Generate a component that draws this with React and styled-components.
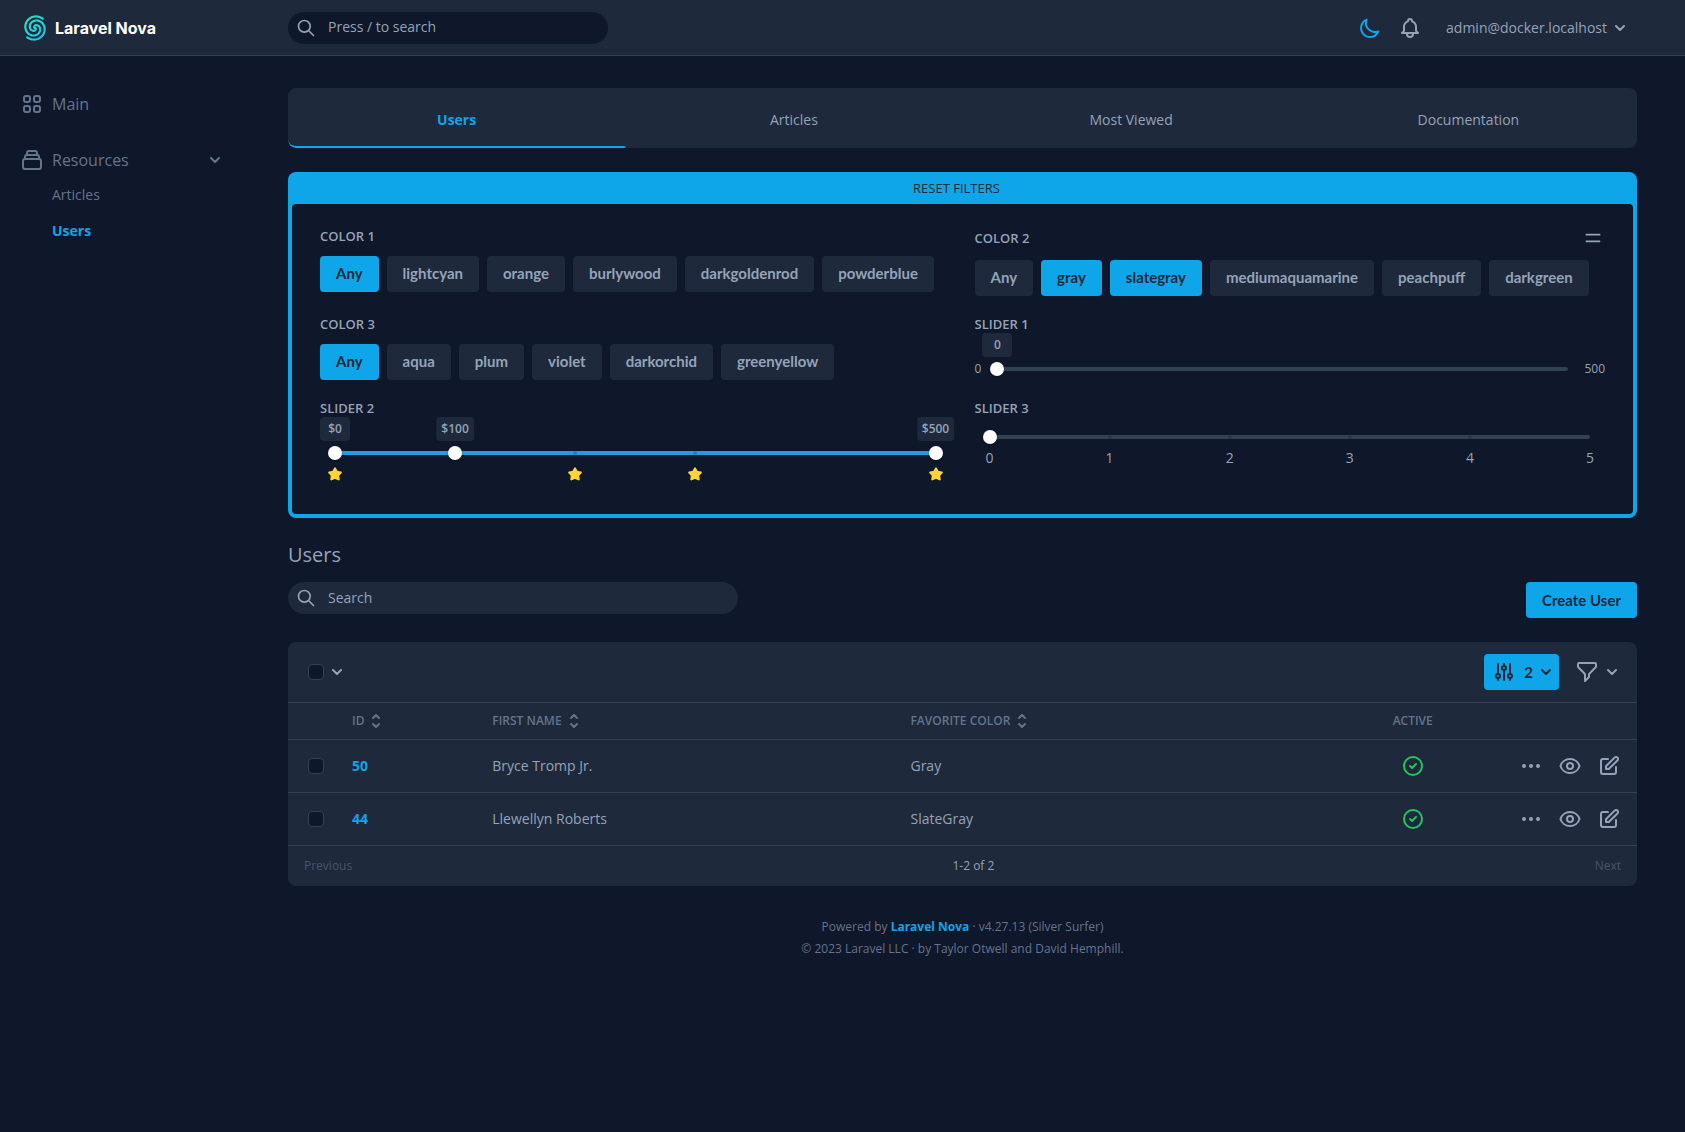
import React, { useState } from "react";
import styled, { createGlobalStyle } from "styled-components";
import {
  HiOutlineAdjustments,
  HiOutlineBell,
  HiOutlineCheckCircle,
  HiOutlineCollection,
  HiOutlineDotsHorizontal,
  HiOutlineEye,
  HiOutlineFilter,
  HiOutlineMenuAlt4,
  HiOutlineMoon,
  HiOutlinePencilAlt,
  HiOutlineSearch,
  HiOutlineViewGrid,
} from "react-icons/hi";

const GlobalStyle = createGlobalStyle`
  * { box-sizing: border-box; }

  body {
    margin: 0;
    background: #0f172a;
    color: #94a3b8;
    font-family: "Open Sans", "Noto Sans", sans-serif;
    font-size: 14px;
    line-height: 20px;
  }

  button, input {
    font: inherit;
    color: inherit;
    margin: 0;
  }

  button {
    padding: 0;
    border: 0;
    background: none;
    cursor: pointer;
  }

  a { text-decoration: none; }
  svg { display: block; flex-shrink: 0; }
`;

/* ---------- header ---------- */

const StyledHeader = styled.header`
  display: flex;
  align-items: center;
  height: 56px;
  padding-right: 48px;
  background: #1e293b;
  border-bottom: 1px solid #334155;
`;

const LogoLink = styled.a`
  display: flex;
  align-items: center;
  gap: 7px;
  width: 288px;
  padding-left: 22px;
  color: #fff;
  font-family: "Inter", sans-serif;
  font-size: 16px;
  font-weight: 700;
`;

const HeaderTools = styled.div`
  display: flex;
  align-items: center;
  gap: 16px;
  margin-left: auto;
`;

const IconButton = styled.button`
  display: flex;
  align-items: center;
  justify-content: center;
  min-width: ${(props) => (props.$small ? "10px" : "24px")};
  height: 24px;
  color: ${(props) => (props.$active ? "#0ea5e9" : "#94a3b8")};
`;

const UserButton = styled.button`
  display: flex;
  align-items: center;
  gap: 8px;
  height: 36px;
  padding: 0 12px 0 8px;
  font-weight: 500;
`;

const SearchLabel = styled.label`
  position: relative;
  display: block;
  width: ${(props) => props.$width};

  svg {
    position: absolute;
    left: 8px;
    top: 6px;
  }
`;

const SearchInput = styled.input`
  display: block;
  width: 100%;
  height: 32px;
  padding: 0 16px 2px 40px;
  border: 0;
  border-radius: 16px;
  outline: none;
  background: ${(props) => props.$bg};

  &::placeholder {
    color: #94a3b8;
    opacity: 1;
  }
`;

/* ---------- page and sidebar ---------- */

const Page = styled.div`
  display: flex;
  align-items: flex-start;
`;

const Sidebar = styled.nav`
  display: flex;
  flex-direction: column;
  flex: 0 0 288px;
  padding: 32px 68px 0 20px;
  color: #64748b;
`;

const MenuHeading = styled.a`
  display: flex;
  align-items: center;
  gap: 8px;
  height: 32px;
  color: inherit;
  font-size: 16px;
  line-height: 24px;
`;

const MenuToggle = styled.button`
  display: flex;
  align-items: center;
  gap: 8px;
  height: 32px;
  margin-top: 24px;
  font-size: 16px;
  line-height: 24px;

  svg:last-child { margin-left: auto; }
`;

const MenuList = styled.ul`
  list-style: none;
  margin: 1px 0 0;
  padding: 0 0 0 32px;
`;

const MenuLink = styled.a`
  display: flex;
  align-items: center;
  height: 36px;
  color: ${(props) => (props.$active ? "#0ea5e9" : "#64748b")};
  font-weight: ${(props) => (props.$active ? 700 : 500)};
`;

const Content = styled.main`
  flex: 1;
  min-width: 0;
  padding: 32px 48px 32px 0;
`;

/* ---------- tabs ---------- */

const TabBar = styled.div`
  display: grid;
  grid-template-columns: repeat(4, 1fr);
  margin-bottom: 24px;
  border-radius: 8px;
  background: #1e293b;
  overflow: hidden;
`;

const Tab = styled.button`
  padding: 22px 16px 16px;
  border-bottom: 2px solid ${(props) => (props.$active ? "#0ea5e9" : "transparent")};
  color: ${(props) => (props.$active ? "#0ea5e9" : "#94a3b8")};
  font-weight: ${(props) => (props.$active ? 700 : 500)};

  &:first-child { border-bottom-left-radius: 8px; }
`;

/* ---------- filters ---------- */

const FilterPanel = styled.section`
  padding: 4px;
  border-radius: 8px;
  background: #0ea5e9;
`;

const ResetButton = styled.button`
  display: block;
  width: 100%;
  height: 28px;
  padding: 0 12px 4px 0;
  color: #1e293b;
  font-size: 13px;
  font-weight: 500;
  text-transform: uppercase;
`;

const FilterGrid = styled.div`
  display: grid;
  grid-template-columns: 1fr 1fr;
  gap: 18px 24px;
  padding: 22px 28px 30px;
  border-radius: 4px;
  background: #0f172a;
`;

const FilterHead = styled.div`
  display: flex;
  align-items: center;
  justify-content: space-between;
`;

const FilterTitle = styled.h3`
  margin: 0;
  font-size: 13px;
  font-weight: 600;
  line-height: 20px;
  text-transform: uppercase;
`;

const ChipRow = styled.div`
  display: flex;
  flex-wrap: wrap;
  gap: 8px;
  margin-top: 10px;
`;

const Chip = styled.button`
  height: 36px;
  padding: 0 16px 2px;
  border-radius: 4px;
  background: ${(props) => (props.$active ? "#0ea5e9" : "#1e293b")};
  color: ${(props) => (props.$active ? "#1e293b" : "#94a3b8")};
  font-family: "Lato", sans-serif;
  font-size: 15px;
  font-weight: 700;
`;

const SliderRow = styled.div`
  display: flex;
  align-items: center;
  gap: 16px;
  margin-top: ${(props) => (props.$bubbles ? "28px" : "12px")};
  padding: ${(props) => (props.$inset ? "0 15px" : "0")};
  font-size: 12px;
  line-height: 14px;
`;

const Rail = styled.div`
  position: relative;
  flex: 1;
  height: 14px;
  display: flex;
  align-items: center;
`;

const Track = styled.div`
  flex: 1;
  height: 4px;
  border-radius: 4px;
  background: #334155;
`;

const TrackFill = styled.div`
  height: 4px;
  border-radius: 4px;
  background: #219fdb;
`;

const Step = styled.span`
  position: absolute;
  top: 5px;
  width: 4px;
  height: 4px;
  margin-left: -2px;
  border-radius: 50%;
  background: rgba(0, 0, 0, 0.16);
`;

const Bubble = styled.output`
  position: absolute;
  bottom: 19px;
  min-width: 30px;
  padding: 2px 5px;
  border-radius: 4px;
  background: #1e293b;
  font-weight: 600;
  line-height: 20px;
  text-align: center;
  transform: translateX(-50%);
`;

// one input per handle, stacked on the same rail
const RangeInput = styled.input`
  position: absolute;
  left: -7px;
  width: calc(100% + 14px);
  height: 14px;
  background: none;
  appearance: none;
  pointer-events: none;

  &::-webkit-slider-thumb {
    appearance: none;
    width: 14px;
    height: 14px;
    border: 0;
    border-radius: 50%;
    background: #fff;
    box-shadow: 0 1px 2px rgba(0, 0, 0, 0.36);
    pointer-events: auto;
    cursor: pointer;
  }
`;

const MarkRow = styled.div`
  position: relative;
  height: 20px;
  margin: 4px 15px 0;
`;

const Mark = styled.span`
  position: absolute;
  transform: translateX(-50%);

  svg { margin-top: 3px; }
`;

/* ---------- resource list ---------- */

const PageTitle = styled.h1`
  margin: 24px 0 14px;
  font-size: 20px;
  font-weight: 400;
  line-height: 26px;
`;

const ListHead = styled.div`
  display: flex;
  align-items: flex-start;
  justify-content: space-between;
  margin-bottom: 24px;
`;

const PrimaryButton = styled.button`
  display: flex;
  align-items: center;
  height: 36px;
  padding: ${(props) => props.$pad || "0 16px"};
  gap: 8px;
  border-radius: 4px;
  background: #0ea5e9;
  color: #1e293b;
  font-family: "Lato", sans-serif;
  font-size: 15px;
  font-weight: 700;
`;

const Card = styled.section`
  border-radius: 8px;
  background: #1e293b;
`;

const Toolbar = styled.div`
  display: flex;
  align-items: center;
  height: 60px;
  padding: 0 20px;
`;

const SelectAll = styled.div`
  display: flex;
  align-items: center;
  gap: 8px;
`;

const ToolbarRight = styled.div`
  display: flex;
  align-items: center;
  gap: 16px;
  margin-left: auto;
`;

const FilterButton = styled.button`
  display: flex;
  align-items: center;
  gap: 8px;
  height: 36px;
`;

const Checkbox = styled.input`
  display: block;
  appearance: none;
  width: 16px;
  height: 16px;
  border: 1px solid #334155;
  border-radius: 4px;
  background: #0f172a;

  &:checked { background: #0ea5e9; }
`;

const Table = styled.table`
  width: 100%;
  border-collapse: separate;
  border-spacing: 0;
  table-layout: fixed;
`;

const Th = styled.th`
  width: ${(props) => props.$width};
  height: 37px;
  padding: 0 8px;
  border-top: 1px solid #334155;
  color: #64748b;
  font-size: 12px;
  font-weight: 600;
  text-align: ${(props) => props.$align || "left"};
  text-transform: uppercase;
  white-space: nowrap;
`;

const SortButton = styled.button`
  display: flex;
  align-items: center;
  gap: 8px;
  font-weight: 600;
  text-transform: uppercase;
`;

const Td = styled.td`
  height: 53px;
  padding: ${(props) => (props.$first ? "0 20px" : "0 8px")};
  border-top: 1px solid #334155;

  svg { margin: 0 auto; }
`;

const IdLink = styled.a`
  color: #0ea5e9;
  font-weight: 700;
`;

const RowActions = styled.div`
  display: flex;
  justify-content: flex-end;
  gap: 15px;
  padding-right: 8px;
`;

const Pagination = styled.nav`
  display: flex;
  align-items: center;
  justify-content: space-between;
  height: 41px;
  padding: 0 16px;
  border-top: 1px solid #334155;
  font-size: 12px;
`;

const PageButton = styled.button`
  color: #475569;
  font-weight: 500;
`;

const Footer = styled.footer`
  margin-top: 30px;
  color: #64748b;
  font-size: 12px;
  line-height: 22px;
  text-align: center;

  p { margin: 0; }
  a { color: #0ea5e9; font-weight: 700; }
`;

const StyledSuccess = styled.span`
  color: #22c55e;
`;

/* ---------- icons ---------- */

function spiralArm(start) {
  const points = [];
  for (let i = 0; i <= 80; i++) {
    const t = i / 80;
    const r = 11.2 * (1 - Math.pow(t, 1.2));
    const angle = ((start - 480 * t) * Math.PI) / 180;
    points.push(`${(12 + r * Math.cos(angle)).toFixed(2)} ${(12 + r * Math.sin(angle)).toFixed(2)}`);
  }
  return `M${points.join("L")}`;
}

const NovaMark = () => (
  <svg width="26" height="26" viewBox="0 0 24 24" fill="none" aria-hidden="true">
    <defs>
      <linearGradient id="nova" x1="0" y1="0" x2="24" y2="24" gradientUnits="userSpaceOnUse">
        <stop offset="0" stopColor="#2ee6a8" />
        <stop offset="0.5" stopColor="#22d3dd" />
        <stop offset="1" stopColor="#22b8f0" />
      </linearGradient>
    </defs>
    <path d={spiralArm(-50)} stroke="url(#nova)" strokeWidth="2" strokeLinecap="round" />
    <path d={spiralArm(130)} stroke="url(#nova)" strokeWidth="2" strokeLinecap="round" />
  </svg>
);

const Chevron = () => (
  <svg width="10" height="6" viewBox="0 0 10 6" fill="none" aria-hidden="true">
    <path d="M1 1l4 4 4-4" stroke="currentColor" strokeWidth="2" strokeLinecap="round" strokeLinejoin="round" />
  </svg>
);

const SortIcon = () => (
  <svg width="8" height="14" viewBox="0 0 8 14" fill="none" aria-hidden="true">
    <path d="M1 4l3-3 3 3M1 10l3 3 3-3" stroke="currentColor" strokeWidth="2" strokeLinecap="round" strokeLinejoin="round" />
  </svg>
);

const Star = () => (
  <svg width="14" height="14" viewBox="0 0 14 14" aria-hidden="true">
    <path
      d="M7 1.4l1.9 3.3 3.9.8-2.6 2.9.5 4L7 10.8l-3.7 1.6.5-4-2.6-2.9 3.9-.8z"
      fill="#ffd43b"
      stroke="#ffd43b"
      strokeWidth="2"
      strokeLinejoin="round"
    />
  </svg>
);

/* ---------- parts ---------- */

function SearchBox({ label, width, bg }) {
  return (
    <SearchLabel $width={width}>
      <HiOutlineSearch size={20} />
      <SearchInput type="search" placeholder={label} aria-label={label} $bg={bg} />
    </SearchLabel>
  );
}

function ColorFilter({ title, options, initial, movable }) {
  const [selected, setSelected] = useState(initial);

  const toggle = (option) => {
    if (option === "Any") {
      setSelected(["Any"]);
      return;
    }
    const rest = selected.filter((s) => s !== "Any");
    const next = rest.includes(option) ? rest.filter((s) => s !== option) : [...rest, option];
    setSelected(next.length ? next : ["Any"]);
  };

  return (
    <div role="group" aria-label={title}>
      <FilterHead>
        <FilterTitle>{title}</FilterTitle>
        {movable && (
          <IconButton aria-label="Move filter">
            <HiOutlineMenuAlt4 size={20} />
          </IconButton>
        )}
      </FilterHead>
      <ChipRow>
        {["Any", ...options].map((option) => (
          <Chip
            key={option}
            $active={selected.includes(option)}
            aria-pressed={selected.includes(option)}
            onClick={() => toggle(option)}
          >
            {option}
          </Chip>
        ))}
      </ChipRow>
    </div>
  );
}

function SliderFilter({ title, max, step = 1, initial, format, ends, steps = [], marks }) {
  const [values, setValues] = useState(initial);
  const pct = (v) => `${(v / max) * 100}%`;

  const from = values.length > 1 ? Math.min(...values) : 0;
  const to = Math.max(...values);

  const change = (index, value) => {
    setValues(values.map((v, i) => (i === index ? Number(value) : v)));
  };

  return (
    <div role="group" aria-label={title}>
      <FilterTitle>{title}</FilterTitle>
      <SliderRow $bubbles={!!format} $inset={!ends}>
        {ends && <span>0</span>}
        <Rail>
          <Track>
            <TrackFill style={{ marginLeft: pct(from), width: pct(to - from) }} />
          </Track>
          {steps.map((s) => (
            <Step key={s} style={{ left: pct(s) }} />
          ))}
          {values.map((value, i) => (
            <React.Fragment key={i}>
              {format && <Bubble style={{ left: pct(value) }}>{format(value)}</Bubble>}
              <RangeInput
                type="range"
                min={0}
                max={max}
                step={step}
                value={value}
                aria-label={`${title} ${i + 1}`}
                onChange={(e) => change(i, e.target.value)}
              />
            </React.Fragment>
          ))}
        </Rail>
        {ends && <span>{max}</span>}
      </SliderRow>
      {marks && (
        <MarkRow>
          {marks.map(({ at, label }) => (
            <Mark key={at} style={{ left: pct(at) }}>
              {label}
            </Mark>
          ))}
        </MarkRow>
      )}
    </div>
  );
}

const tabs = ["Users", "Articles", "Most Viewed", "Documentation"];

const users = [
  { id: 50, name: "Bryce Tromp Jr.", color: "Gray" },
  { id: 44, name: "Llewellyn Roberts", color: "SlateGray" },
];

const starMarks = [0, 200, 300, 500].map((at) => ({ at, label: <Star /> }));
const numberMarks = [0, 1, 2, 3, 4, 5].map((at) => ({ at, label: at }));

export default function App() {
  const [tab, setTab] = useState("Users");

  return (
    <>
      <GlobalStyle />
      <StyledHeader>
        <LogoLink href="#">
          <NovaMark />
          Laravel Nova
        </LogoLink>
        <SearchBox label="Press / to search" width="320px" bg="#0f172a" />
        <HeaderTools>
          <IconButton $active aria-label="Theme">
            <HiOutlineMoon size={24} />
          </IconButton>
          <IconButton aria-label="Notifications">
            <HiOutlineBell size={24} />
          </IconButton>
          <UserButton>
            admin@docker.localhost
            <Chevron />
          </UserButton>
        </HeaderTools>
      </StyledHeader>

      <Page>
        <Sidebar>
          <MenuHeading href="#">
            <HiOutlineViewGrid size={24} />
            Main
          </MenuHeading>
          <MenuToggle aria-expanded="true">
            <HiOutlineCollection size={24} />
            Resources
            <Chevron />
          </MenuToggle>
          <MenuList>
            <li><MenuLink href="#">Articles</MenuLink></li>
            <li><MenuLink href="#" $active>Users</MenuLink></li>
          </MenuList>
        </Sidebar>

        <Content>
          <TabBar role="tablist">
            {tabs.map((name) => (
              <Tab
                key={name}
                role="tab"
                aria-selected={tab === name}
                $active={tab === name}
                onClick={() => setTab(name)}
              >
                {name}
              </Tab>
            ))}
          </TabBar>

          <FilterPanel>
            <ResetButton>Reset Filters</ResetButton>
            <FilterGrid>
              <ColorFilter
                title="Color 1"
                options={["lightcyan", "orange", "burlywood", "darkgoldenrod", "powderblue"]}
                initial={["Any"]}
              />
              <ColorFilter
                title="Color 2"
                options={["gray", "slategray", "mediumaquamarine", "peachpuff", "darkgreen"]}
                initial={["gray", "slategray"]}
                movable
              />
              <ColorFilter
                title="Color 3"
                options={["aqua", "plum", "violet", "darkorchid", "greenyellow"]}
                initial={["Any"]}
              />
              <SliderFilter title="Slider 1" max={500} initial={[0]} format={(v) => v} ends />
              <SliderFilter
                title="Slider 2"
                max={500}
                step={100}
                initial={[0, 100, 500]}
                format={(v) => `$${v}`}
                steps={[200, 300]}
                marks={starMarks}
              />
              <SliderFilter title="Slider 3" max={5} initial={[0]} steps={[1, 2, 3, 4]} marks={numberMarks} />
            </FilterGrid>
          </FilterPanel>

          <PageTitle>Users</PageTitle>
          <ListHead>
            <SearchBox label="Search" width="33.333%" bg="#1e293b" />
            <PrimaryButton>Create User</PrimaryButton>
          </ListHead>

          <Card>
            <Toolbar>
              <SelectAll>
                <Checkbox type="checkbox" aria-label="Select all" />
                <IconButton $small aria-label="Select options">
                  <Chevron />
                </IconButton>
              </SelectAll>
              <ToolbarRight>
                <PrimaryButton $pad="0 8px" aria-label="Filters, 2 active">
                  <HiOutlineAdjustments size={24} />
                  2
                  <Chevron />
                </PrimaryButton>
                <FilterButton aria-label="Filter menu">
                  <HiOutlineFilter size={24} />
                  <Chevron />
                </FilterButton>
              </ToolbarRight>
            </Toolbar>

            <Table>
              <thead>
                <tr>
                  <Th $width="56px" aria-label="Selected" />
                  <Th $width="10.4%"><SortButton>ID <SortIcon /></SortButton></Th>
                  <Th $width="31%"><SortButton>First Name <SortIcon /></SortButton></Th>
                  <Th $width="35.6%"><SortButton>Favorite Color <SortIcon /></SortButton></Th>
                  <Th $width="60px" $align="center">Active</Th>
                  <Th aria-label="Actions" />
                </tr>
              </thead>
              <tbody>
                {users.map((user) => (
                  <tr key={user.id}>
                    <Td $first>
                      <Checkbox type="checkbox" aria-label={`Select ${user.name}`} />
                    </Td>
                    <Td><IdLink href="#">{user.id}</IdLink></Td>
                    <Td>{user.name}</Td>
                    <Td>{user.color}</Td>
                    <Td>
                      <StyledSuccess><HiOutlineCheckCircle size={24} /></StyledSuccess>
                    </Td>
                    <Td>
                      <RowActions>
                        <IconButton aria-label="More"><HiOutlineDotsHorizontal size={24} /></IconButton>
                        <IconButton aria-label="View"><HiOutlineEye size={24} /></IconButton>
                        <IconButton aria-label="Edit"><HiOutlinePencilAlt size={24} /></IconButton>
                      </RowActions>
                    </Td>
                  </tr>
                ))}
              </tbody>
            </Table>

            <Pagination>
              <PageButton disabled>Previous</PageButton>
              <span>1-2 of 2</span>
              <PageButton disabled>Next</PageButton>
            </Pagination>
          </Card>

          <Footer>
            <p>Powered by <a href="#">Laravel Nova</a> · v4.27.13 (Silver Surfer)</p>
            <p>© 2023 Laravel LLC · by Taylor Otwell and David Hemphill.</p>
          </Footer>
        </Content>
      </Page>
    </>
  );
}
